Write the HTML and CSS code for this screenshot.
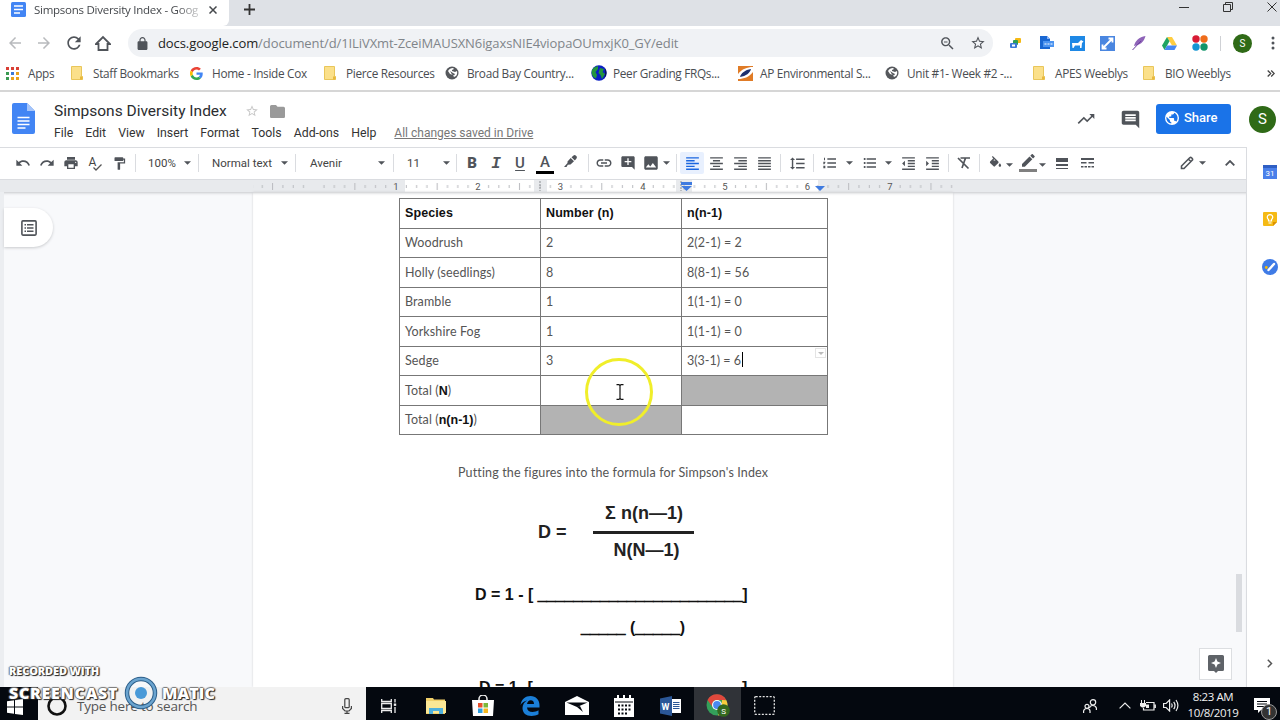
FILE: index.html
```html
<!DOCTYPE html>
<html lang="en">
<head>
  <meta charset="UTF-8" />
  <meta name="viewport" content="width=device-width, initial-scale=1.0" />
  <title>Simpsons Diversity Index - Google Docs</title>
  <link rel="stylesheet" href="styles.css">
</head>
<body>
  <svg class="defs" width="0" height="0">
    <symbol id="caret" viewBox="0 0 8 4"><path d="M0 0h8L4 4z"/></symbol>
    <symbol id="folder" viewBox="0 0 12 14"><path fill="#fbe08a" stroke="#e9c65a" d="M.5.5h10v10h1v3H.5z"/><path fill="#e9b93c" d="M9 10.500h2.500v3H9z"/></symbol>
    <symbol id="world" viewBox="0 0 14 14"><circle cx="7" cy="7" r="6.500" fill="#55585c"/><path fill="#fff" d="M3 5c1-2 3-3 5-3l1 1-2 1v1l3 1 2-1c.5 2 0 4-1 5L9 11l-1-2-3-1-1-1.500z"/><path fill="#55585c" d="M5 5l3 2 2 1-1 1.500-2-1z"/></symbol>
    <symbol id="star" viewBox="0 0 24 24"><path d="M22 9.240l-7.190-.62L12 2 9.190 8.630 2 9.240l5.460 4.730L5.820 21 12 17.270 18.180 21l-1.630-7.030L22 9.240zM12 15.400l-3.760 2.270 1-4.280-3.320-2.880 4.380-.38L12 6.100l1.710 4.040 4.380.38-3.320 2.880 1 4.280L12 15.400z"/></symbol>
  </svg>

  <!-- Browser chrome -->
  <div class="tabstrip">
    <div class="tab">
      <svg width="15" height="15" viewBox="0 0 15 15"><rect width="15" height="15" rx="1.500" fill="#4285f4"/><path stroke="#fff" stroke-width="1.500" d="M3 4h9M3 7.500h9M3 11h6"/></svg>
      <span class="tab-title">Simpsons Diversity Index - Goog</span>
      <svg width="8" height="8" viewBox="0 0 8 8"><path stroke="#45484c" stroke-width="1.500" d="M.5.5l7 7M7.500.5l-7 7"/></svg>
    </div>
    <svg class="newtab" width="11" height="11" viewBox="0 0 11 11"><path stroke="#333" stroke-width="1.800" d="M5.500 0v11M0 5.500h11"/></svg>
    <div class="window-buttons">
      <svg width="10" height="10" viewBox="0 0 10 10"><path stroke="#333" d="M0 5.500h10"/></svg>
      <svg width="10" height="10" viewBox="0 0 10 10"><path fill="none" stroke="#333" d="M.5 2.500h7v7h-7zM2.500 2.500v-2h7v7h-2"/></svg>
      <svg width="10" height="10" viewBox="0 0 10 10"><path stroke="#333" d="M.5.5l9 9M9.500.5l-9 9"/></svg>
    </div>
  </div>

  <div class="address-row">
    <div class="nav">
      <svg class="off" width="18" height="18" viewBox="0 0 24 24"><path d="M20 11H7.830l5.590-5.590L12 4l-8 8 8 8 1.410-1.410L7.830 13H20v-2z"/></svg>
      <svg class="off" width="18" height="18" viewBox="0 0 24 24"><path d="M12 4l-1.410 1.410L16.170 11H4v2h12.170l-5.580 5.590L12 20l8-8z"/></svg>
      <svg width="20" height="20" viewBox="0 0 24 24"><path d="M17.650 6.350C16.200 4.900 14.210 4 12 4c-4.420 0-7.990 3.580-7.990 8s3.570 8 7.990 8c3.730 0 6.840-2.550 7.730-6h-2.080c-.82 2.330-3.040 4-5.650 4-3.310 0-6-2.690-6-6s2.690-6 6-6c1.660 0 3.140.69 4.220 1.780L13 11h7V4l-2.350 2.350z"/></svg>
      <svg width="16" height="16" viewBox="0 0 16 16"><path fill="none" stroke="#50545a" stroke-width="1.800" d="M1 9l7-7L15 9h-2.500v6h-9V9z"/></svg>
    </div>
    <div class="omnibox">
      <svg width="11" height="13" viewBox="4 1 16 21"><path d="M18 8h-1V6c0-2.760-2.240-5-5-5S7 3.240 7 6v2H6c-1.100 0-2 .9-2 2v10c0 1.100.9 2 2 2h12c1.100 0 2-.9 2-2V10c0-1.100-.9-2-2-2zM8.900 6c0-1.710 1.390-3.100 3.100-3.100s3.100 1.390 3.100 3.100v2H8.900V6z"/></svg>
      <span class="url"><b>docs.google.com</b>/document/d/1ILiVXmt-ZceiMAUSXN6igaxsNIE4viopaOUmxjK0_GY/edit</span>
      <svg class="zoom-out" width="17" height="17" viewBox="0 0 24 24"><path d="M15.500 14h-.79l-.28-.27C15.410 12.590 16 11.110 16 9.500 16 5.910 13.090 3 9.500 3S3 5.910 3 9.500 5.910 16 9.500 16c1.610 0 3.090-.59 4.230-1.570l.27.28v.79l5 4.990L20.490 19l-4.990-5zm-6 0C7.010 14 5 11.990 5 9.500S7.010 5 9.500 5 14 7.010 14 9.500 11.990 14 9.500 14zM7 9h5v1.500H7z"/></svg>
      <svg class="fav" width="16" height="16"><use href="#star"/></svg>
    </div>
    <div class="extensions">
      <svg width="12" height="12" viewBox="0 0 12 12"><rect x="5" y="1" width="6" height="5" rx="1" fill="#f5b914"/><rect x="3" y="3" width="5" height="5" rx="1" fill="#2f9e54"/><rect x="0" y="6" width="7" height="5" rx="1" fill="#3b78d8"/><rect x="2" y="7.500" width="3" height="2" fill="#fff"/></svg>
      <svg width="15" height="14" viewBox="0 0 15 14"><path fill="#1967d2" d="M1 0h7l3 3v10H1z"/><path fill="#8ab4f8" d="M8 0l3 3H8z"/><rect x="4" y="5" width="11" height="6" fill="#4c94f0"/><path stroke="#fff" d="M5.500 8h2M8.500 8h2M11.500 8h2"/></svg>
      <svg width="15" height="15" viewBox="0 0 15 15"><rect width="15" height="15" fill="#1e88e5"/><path fill="#fff" d="M2 7h6l3-3 2.500 1.500-1.500 1.500-.5 5H10V9.500H5L3.500 12H2.500z"/></svg>
      <svg width="15" height="15" viewBox="0 0 15 15"><rect width="15" height="15" fill="#4a86e0"/><path fill="none" stroke="#fff" stroke-width="1.800" d="M8.500 2.500h4v4M12.500 2.500l-10 10M6.500 12.500h-4v-4"/></svg>
      <svg width="14" height="15" viewBox="0 0 14 15"><path fill="#8e63b8" d="M13.500 0C7 1 3 5 2 10c6-1 10-4 11.500-10z"/><path stroke="#6b3fa0" d="M.5 14L9 5"/></svg>
      <svg width="15" height="13" viewBox="0 0 15 13"><path fill="#ffcd40" d="M5 0h5l5 8.500h-5z"/><path fill="#1fa463" d="M5 0l2.500 4.300L2.500 13 0 8.500z"/><path fill="#4688f4" d="M5 8.500h10L12.500 13h-10z"/></svg>
      <svg width="16" height="16" viewBox="0 0 16 16"><circle cx="4" cy="4" r="3.700" fill="#d81b35"/><circle cx="12" cy="4" r="3.700" fill="#ef6c1a"/><circle cx="4" cy="12" r="3.700" fill="#1595d3"/><circle cx="12" cy="12" r="3.700" fill="#12966a"/></svg>
    </div>
    <span class="divider"></span>
    <span class="avatar small">S</span>
    <svg class="dots" width="4" height="14" viewBox="0 0 4 14"><circle cx="2" cy="2" r="1.500"/><circle cx="2" cy="7" r="1.500"/><circle cx="2" cy="12" r="1.500"/></svg>
  </div>

  <div class="bookmarks">
    <div class="bookmark"><svg width="13" height="13" viewBox="0 0 13 13"><path fill="#d93f35" d="M0 0h3v3H0zM5 0h3v3H5zM10 0h3v3h-3z"/><path fill="#3a9a52" d="M0 5h3v3H0z"/><path fill="#3b78d8" d="M5 5h3v3H5z"/><path fill="#e8a01c" d="M10 5h3v3h-3zM5 10h3v3H5zM10 10h3v3h-3z"/><path fill="#3a9a52" d="M0 10h3v3H0z"/></svg><span>Apps</span></div>
    <div class="bookmark"><svg width="12" height="14"><use href="#folder"/></svg><span>Staff Bookmarks</span></div>
    <div class="bookmark"><svg width="13" height="13" viewBox="0 0 48 48"><path fill="#ea4335" d="M24 9.500c3.540 0 6.710 1.220 9.210 3.600l6.850-6.850C35.900 2.380 30.470 0 24 0 14.620 0 6.510 5.380 2.560 13.220l7.980 6.190C12.430 13.720 17.740 9.500 24 9.500z"/><path fill="#4285f4" d="M46.980 24.550c0-1.570-.15-3.090-.38-4.550H24v9.020h12.940c-.58 2.960-2.260 5.480-4.780 7.180l7.730 6c4.510-4.180 7.090-10.360 7.090-17.650z"/><path fill="#fbbc05" d="M10.530 28.590A14.500 14.500 0 0 1 10.530 19.410l-7.980-6.190a24 24 0 0 0 0 21.560z"/><path fill="#34a853" d="M24 48c6.480 0 11.930-2.130 15.890-5.810l-7.730-6c-2.150 1.450-4.920 2.300-8.160 2.300-6.260 0-11.570-4.220-13.470-9.910l-7.980 6.190C6.510 42.620 14.620 48 24 48z"/></svg><span>Home - Inside Cox</span></div>
    <div class="bookmark"><svg width="12" height="14"><use href="#folder"/></svg><span>Pierce Resources</span></div>
    <div class="bookmark"><svg width="14" height="14"><use href="#world"/></svg><span>Broad Bay Country...</span></div>
    <div class="bookmark"><svg width="16" height="16" viewBox="0 0 16 16"><circle cx="8" cy="8" r="7.700" fill="#0a1fc4"/><path fill="#22963c" d="M3 2.500l4-1.500v3L4.500 7 6 10l-1 3.500C1 12 0 8 1 5zM9 3l4 1-1.500 3 2.500 2-3 5-1.500-4L7.500 8z"/><path fill="#0b1040" d="M14 3c2 3 2 7-.5 10 .8-3 1-7 .5-10z"/></svg><span>Peer Grading FRQs...</span></div>
    <div class="bookmark"><svg width="15" height="15" viewBox="0 0 15 15"><rect width="15" height="15" fill="#e07b26"/><path fill="#fff" d="M0 8C4 3 9 1 15 1v5C11 11 6 13 0 13z"/><path fill="#1c2f6e" d="M2 11c1-4 5-7 11-8-1 4-5 7-11 8z"/></svg><span>AP Environmental S...</span></div>
    <div class="bookmark"><svg width="14" height="14"><use href="#world"/></svg><span>Unit #1- Week #2 -...</span></div>
    <div class="bookmark"><svg width="12" height="14"><use href="#folder"/></svg><span>APES Weeblys</span></div>
    <div class="bookmark"><svg width="12" height="14"><use href="#folder"/></svg><span>BIO Weeblys</span></div>
    <svg class="more" width="8" height="7" viewBox="0 0 8 7"><path fill="none" stroke="#444" stroke-width="1.300" d="M.7.500l3 3-3 3M4.200.500l3 3-3 3"/></svg>
  </div>

  <!-- Docs header -->
  <header class="docs-header">
    <svg class="docs-logo" width="23" height="31" viewBox="0 0 23 31"><path fill="#4285f4" d="M2 0h13l8 8v21a2 2 0 0 1-2 2H2a2 2 0 0 1-2-2V2a2 2 0 0 1 2-2z"/><path fill="#a6c5fa" d="M15 0l8 8h-8z"/><path stroke="#fff" stroke-width="1.500" d="M5.500 14.500h12M5.500 18h12M5.500 21.500h12M5.500 25h8"/></svg>
    <div class="doc-info">
      <div class="doc-title">
        <span>Simpsons Diversity Index</span>
        <svg class="title-star" width="14" height="14"><use href="#star"/></svg>
        <svg width="15" height="13" viewBox="2 4 20 16" preserveAspectRatio="none"><path fill="#9a9a9a" d="M10 4H4c-1.100 0-1.990.9-1.990 2L2 18c0 1.100.9 2 2 2h16c1.100 0 2-.9 2-2V8c0-1.100-.9-2-2-2h-8l-2-2z"/></svg>
      </div>
      <nav class="menus">
        <span>File</span><span>Edit</span><span>View</span><span>Insert</span><span>Format</span><span>Tools</span><span>Add-ons</span><span>Help</span>
        <span class="saved">All changes saved in Drive</span>
      </nav>
    </div>
    <div class="header-actions">
      <svg width="20" height="20" viewBox="0 0 24 24"><path d="M16 6l2.290 2.290-4.880 4.880-4-4L2 16.590 3.410 18l6-6 4 4 6.300-6.290L22 12V6z"/></svg>
      <svg width="21" height="21" viewBox="0 0 24 24"><path d="M21.990 4c0-1.100-.89-2-1.990-2H4c-1.100 0-2 .9-2 2v12c0 1.100.9 2 2 2h14l4 4-.01-18zM18 14H6v-2h12v2zm0-3H6V9h12v2zm0-3H6V6h12v2z"/></svg>
      <div class="share"><svg width="14" height="14" viewBox="2 2 20 20"><circle cx="12" cy="12" r="10" fill="#fff"/><path fill="#1a73e8" d="M11 19.930c-3.950-.49-7-3.850-7-7.930 0-.62.08-1.210.21-1.790L9 15v1c0 1.100.9 2 2 2v1.930zM17.900 17.390c-.26-.81-1-1.390-1.900-1.390h-1v-3c0-.55-.45-1-1-1H8v-2h2c.55 0 1-.45 1-1V7h2c1.100 0 2-.9 2-2v-.41c2.930 1.190 5 4.060 5 7.410 0 2.080-.8 3.970-2.100 5.390z"/></svg><span>Share</span></div>
      <span class="avatar">S</span>
    </div>
  </header>

  <div class="workspace">
    <main class="editor">
      <div class="toolbar">
        <div class="group g-edit">
          <i class="tool"><svg width="16" height="16" viewBox="0 0 24 24"><path d="M12.500 8c-2.650 0-5.050.99-6.900 2.600L2 7v9h9l-3.620-3.620c1.390-1.160 3.160-1.880 5.120-1.880 3.540 0 6.550 2.310 7.600 5.500l2.370-.78C21.080 11.030 17.150 8 12.500 8z"/></svg></i>
          <i class="tool"><svg width="16" height="16" viewBox="0 0 24 24"><path d="M18.400 10.600C16.550 8.990 14.150 8 11.500 8c-4.650 0-8.580 3.030-9.960 7.220L3.900 16c1.050-3.190 4.050-5.500 7.600-5.500 1.950 0 3.730.72 5.120 1.880L13 16h9V7l-3.600 3.600z"/></svg></i>
          <i class="tool"><svg width="16" height="16" viewBox="0 0 24 24"><path d="M19 8H5c-1.660 0-3 1.340-3 3v6h4v4h12v-4h4v-6c0-1.660-1.340-3-3-3zm-3 11H8v-5h8v5zm3-7c-.55 0-1-.45-1-1s.45-1 1-1 1 .45 1 1-.45 1-1 1zm-1-9H6v4h12V3z"/></svg></i>
          <i class="tool spell"><span>A</span><svg width="9" height="7" viewBox="0 0 9 7"><path fill="none" stroke="#555" stroke-width="1.300" d="M.5 3.500L3 6l5.500-5.500"/></svg></i>
          <i class="tool"><svg width="15" height="15" viewBox="0 0 24 24"><path d="M18 4V3c0-.55-.45-1-1-1H5c-.55 0-1 .45-1 1v4c0 .55.45 1 1 1h12c.55 0 1-.45 1-1V6h1v4H9v11c0 .55.45 1 1 1h2c.55 0 1-.45 1-1v-9h8V4h-3z"/></svg></i>
        </div>
        <div class="group g-zoom"><span>100%</span><svg class="caret"><use href="#caret"/></svg></div>
        <div class="group g-style"><span>Normal text</span><svg class="caret"><use href="#caret"/></svg></div>
        <div class="group g-font"><span>Avenir</span><svg class="caret"><use href="#caret"/></svg></div>
        <div class="group g-size"><span>11</span><svg class="caret"><use href="#caret"/></svg></div>
        <div class="group g-text">
          <i class="tool letter bold">B</i>
          <i class="tool letter italic">I</i>
          <i class="tool letter underline">U</i>
          <i class="tool letter color">A</i>
          <i class="tool marker"><svg width="13" height="13" viewBox="0 0 13 13"><path d="M3.500 6.500L6.700 3 10 6.200 6.500 9.500 3.800 9.800 2.500 12H0l3.500-4zM7.500 2.300L9.500.5q1.200-.8 2.200 0l.8.8q.8 1 0 2.200L10.800 5.500z"/></svg></i>
        </div>
        <div class="group g-insert">
          <i class="tool"><svg width="18" height="18" viewBox="0 0 24 24"><path d="M3.900 12c0-1.710 1.390-3.100 3.100-3.100h4V7H7c-2.760 0-5 2.240-5 5s2.240 5 5 5h4v-1.900H7c-1.710 0-3.100-1.390-3.100-3.100zM8 13h8v-2H8v2zm9-6h-4v1.900h4c1.710 0 3.100 1.390 3.100 3.100s-1.390 3.100-3.100 3.100h-4V17h4c2.760 0 5-2.240 5-5s-2.240-5-5-5z"/></svg></i>
          <i class="tool"><svg width="16" height="16" viewBox="0 0 24 24"><path d="M22 4c0-1.100-.9-2-2-2H4c-1.100 0-2 .9-2 2v12c0 1.100.9 2 2 2h14l4 4V4zm-5 7h-4v4h-2v-4H7V9h4V5h2v4h4v2z"/></svg></i>
          <i class="tool image"><svg width="18" height="18" viewBox="0 0 24 24"><path d="M21 19V5c0-1.100-.9-2-2-2H5c-1.100 0-2 .9-2 2v14c0 1.100.9 2 2 2h14c1.100 0 2-.9 2-2zM8.500 13.500l2.500 3.010L14.500 12l4.500 6H5l3.500-4.500z"/></svg></i>
          <svg class="caret"><use href="#caret"/></svg>
        </div>
        <div class="group g-align">
          <i class="tool active"><svg width="17" height="17" viewBox="0 0 24 24"><path d="M15 15H3v2h12v-2zm0-8H3v2h12V7zM3 13h18v-2H3v2zm0 8h18v-2H3v2zM3 3v2h18V3H3z"/></svg></i>
          <i class="tool"><svg width="17" height="17" viewBox="0 0 24 24"><path d="M7 15v2h10v-2H7zm-4 6h18v-2H3v2zm0-8h18v-2H3v2zm4-6v2h10V7H7zM3 3v2h18V3H3z"/></svg></i>
          <i class="tool"><svg width="17" height="17" viewBox="0 0 24 24"><path d="M3 21h18v-2H3v2zm6-4h12v-2H9v2zm-6-4h18v-2H3v2zm6-4h12V7H9v2zM3 3v2h18V3H3z"/></svg></i>
          <i class="tool"><svg width="17" height="17" viewBox="0 0 24 24"><path d="M3 21h18v-2H3v2zm0-4h18v-2H3v2zm0-4h18v-2H3v2zm0-4h18V7H3v2zm0-6v2h18V3H3z"/></svg></i>
        </div>
        <div class="group g-spacing">
          <i class="tool"><svg width="17" height="17" viewBox="0 0 24 24"><path d="M6 7h2.500L5 3.500 1.500 7H4v10H1.500L5 20.500 8.500 17H6V7zm4-2v2h12V5H10zm0 14h12v-2H10v2zm0-6h12v-2H10v2z"/></svg></i>
        </div>
        <div class="group g-lists">
          <i class="tool"><svg width="16" height="16" viewBox="0 0 24 24"><path d="M3 4h1.500v4H3zM2 10h3v1.500L3.500 14H2zM2 16h3v4H2zM8 5v2h13V5zM8 19h13v-2H8zM8 13h13v-2H8z"/></svg></i>
          <svg class="caret"><use href="#caret"/></svg>
          <i class="tool"><svg width="16" height="16" viewBox="0 0 24 24"><path d="M4 10.500c-.83 0-1.500.67-1.500 1.500s.67 1.500 1.500 1.500 1.500-.67 1.500-1.500-.67-1.500-1.500-1.500zm0-6c-.83 0-1.500.67-1.500 1.500S3.170 7.500 4 7.500 5.500 6.830 5.500 6 4.830 4.500 4 4.500zm0 12c-.83 0-1.500.68-1.500 1.500s.68 1.500 1.500 1.500 1.500-.68 1.500-1.500-.67-1.500-1.500-1.500zM7 19h14v-2H7v2zm0-6h14v-2H7v2zm0-8v2h14V5H7z"/></svg></i>
          <svg class="caret second"><use href="#caret"/></svg>
          <i class="tool"><svg width="17" height="17" viewBox="0 0 24 24"><path d="M11 17h10v-2H11v2zm-8-5l4 4V8l-4 4zm0 9h18v-2H3v2zM3 3v2h18V3H3zm8 6h10V7H11v2zm0 4h10v-2H11v2z"/></svg></i>
          <i class="tool"><svg width="17" height="17" viewBox="0 0 24 24"><path d="M3 21h18v-2H3v2zM3 8v8l4-4-4-4zm8 9h10v-2H11v2zM3 3v2h18V3H3zm8 6h10V7H11v2zm0 4h10v-2H11v2z"/></svg></i>
        </div>
        <div class="group g-clear">
          <i class="tool"><svg width="14" height="14" viewBox="0 0 14 14"><path fill="none" stroke="#50545a" stroke-width="1.700" d="M3.500 2h9.500M8.500 2L5 12M1 2l10.500 10.500"/></svg></i>
        </div>
        <div class="group g-cell">
          <i class="tool"><svg width="15" height="15" viewBox="0 0 24 24"><path d="M16.560 8.940L7.620 0 6.210 1.410l2.380 2.380-5.150 5.150c-.59.59-.59 1.540 0 2.120l5.500 5.500c.29.290.68.440 1.060.440s.77-.15 1.060-.44l5.500-5.500c.59-.58.59-1.530 0-2.120zM8.500 6.700L10 5.210 12 7.500zM19 11.500s-2 2.170-2 3.500c0 1.100.9 2 2 2s2-.9 2-2c0-1.330-2-3.500-2-3.500z"/></svg></i>
          <svg class="caret"><use href="#caret"/></svg>
          <i class="tool"><svg width="18" height="18" viewBox="0 0 24 24"><path d="M17.750 7L14 3.250l-10 10V17h3.750l10-10zm2.960-2.960c.39-.39.39-1.020 0-1.410L18.370.29c-.39-.39-1.020-.39-1.410 0L15 2.250 18.750 6l1.960-1.960z"/><path fill="#808080" d="M0 20h24v4H0z"/></svg></i>
          <svg class="caret"><use href="#caret"/></svg>
          <i class="tool weight"><svg width="12" height="11" viewBox="0 0 12 11"><path d="M0 0h12v4H0zM0 6h12v2H0zM0 10h12v1H0z"/></svg></i>
          <i class="tool dash"><svg width="13" height="10" viewBox="0 0 13 10"><path d="M0 0h13v2H0zM0 4h5.500v1.500H0zM7.500 4H13v1.500H7.500zM0 8h2.500v1.500H0zM3.500 8H6v1.500H3.500zM7 8h2.500v1.500H7zM10.500 8H13v1.500h-2.500z"/></svg></i>
        </div>
        <div class="g-mode">
          <i class="tool"><svg width="14" height="14" viewBox="0 0 14 14"><path fill="none" stroke="#50545a" stroke-width="1.600" d="M1.500 12.500V10L9.700 1.800q1-.8 1.800 0l.7.700q.8 1 0 1.800L4 12.500zM8.500 3.200l2.300 2.300"/></svg></i>
          <svg class="caret"><use href="#caret"/></svg>
          <svg class="collapse" width="10" height="6" viewBox="0 0 10 6"><path fill="none" stroke="#50545a" stroke-width="1.800" d="M.7 5.300L5 1l4.300 4.300"/></svg>
        </div>
      </div>

      <svg class="ruler" width="1246" height="12" viewBox="0 0 1246 12">
        <defs>
          <!-- one inch is 82.3px, eighths between the numbers -->
          <pattern id="inch" x="396" y="0" width="82.3" height="12" patternUnits="userSpaceOnUse">
            <path stroke="#b9bbbf" d="M10.300 5v3M20.600 5v3M30.900 5v3M41.200 3v7M51.500 5v3M61.800 5v3M72.100 5v3"/>
          </pattern>
        </defs>
        <path fill="#fff" d="M405 0h129v12H405zM547 0h129v12H547zM692 0h126v12H692z"/>
        <rect x="253" width="700" height="12" fill="url(#inch)"/>
        <path stroke="#8a8d91" stroke-dasharray="2 1" d="M540 1v10M681 1v10"/>
        <g class="ruler-numbers"><text x="396" y="9.500">1</text><text x="478" y="9.500">2</text><text x="560.500" y="9.500">3</text><text x="643" y="9.500">4</text><text x="725" y="9.500">5</text><text x="807.500" y="9.500">6</text><text x="890" y="9.500">7</text></g>
        <path fill="#3f7be0" d="M681 2h11v3h-11zM681 6h11l-5.500 5zM815 6h10l-5 5z"/>
      </svg>

      <div class="canvas">
        <div class="left-rail">
          <div class="outline-button">
            <svg width="16" height="16" viewBox="0 0 16 16"><rect x=".9" y=".9" width="14.200" height="14.200" rx="1" fill="none" stroke="#50545a" stroke-width="1.600"/><path stroke="#50545a" stroke-width="1.500" d="M3.500 4.700h1.500M6 4.700h6.500M3.500 8h1.500M6 8h6.500M3.500 11.300h1.500M6 11.300h6.500"/></svg>
          </div>
        </div>
        <article class="page">
          <table class="species">
            <tr><th>Species</th><th>Number (n)</th><th>n(n-1)</th></tr>
            <tr><td>Woodrush</td><td>2</td><td>2(2-1) = 2</td></tr>
            <tr><td>Holly (seedlings)</td><td>8</td><td>8(8-1) = 56</td></tr>
            <tr><td>Bramble</td><td>1</td><td>1(1-1) = 0</td></tr>
            <tr><td>Yorkshire Fog</td><td>1</td><td>1(1-1) = 0</td></tr>
            <tr><td>Sedge</td><td>3</td><td class="editing">3(3-1) = 6<span class="text-cursor"></span><span class="cell-menu"><svg width="6" height="3"><use href="#caret"/></svg></span></td></tr>
            <tr><td>Total (<b>N</b>)</td><td></td><td class="shaded"></td></tr>
            <tr><td>Total (<b>n(n-1)</b>)</td><td class="shaded"></td><td></td></tr>
          </table>
          <p class="lead">Putting the figures into the formula for Simpson's Index</p>
          <div class="formula">
            <span class="lhs">D =</span>
            <span class="fraction"><span class="top">Σ n(n—1)</span><span class="bottom">N(N—1)</span></span>
          </div>
          <p class="blank first">D = 1 - [ <span>_______________________</span>]</p>
          <p class="blank second"><span>_____</span> (<span>_____</span>)</p>
          <p class="blank third">D = 1- [ <span>_______________________</span>]</p>
        </article>
        <div class="right-rail">
          <div class="scroll-thumb"></div>
          <div class="explore"><svg width="16" height="18" viewBox="0 0 16 18"><path fill="#5f6368" d="M1.500 0h13A1.500 1.500 0 0 1 16 1.500v13a1.500 1.500 0 0 1-1.500 1.500H10l-2 2-2-2H1.500A1.500 1.500 0 0 1 0 14.500v-13A1.500 1.500 0 0 1 1.500 0z"/><path fill="#fff" d="M8 3l1.400 3.600L13 8 9.400 9.400 8 13 6.600 9.400 3 8l3.600-1.400z"/></svg></div>
        </div>
      </div>
    </main>

    <aside class="side-panel">
      <div class="calendar">31</div>
      <svg class="keep" width="14" height="14" viewBox="0 0 14 14"><path fill="#f5ba15" d="M1 0h12a1 1 0 0 1 1 1v9l-4 4H1a1 1 0 0 1-1-1V1a1 1 0 0 1 1-1z"/><path fill="#dc9200" d="M10 10h4l-4 4z"/><path fill="none" stroke="#fff" stroke-width="1.200" d="M5.500 9V7.500a2.700 2.700 0 1 1 3 0V9zM5.500 11h3"/></svg>
      <svg class="tasks" width="16" height="16" viewBox="0 0 16 16"><circle cx="8" cy="8" r="8" fill="#3f7be6"/><path stroke="#fff" stroke-width="2.400" stroke-linecap="round" d="M6.500 11L12 5"/><circle cx="4.300" cy="8.500" r="1.400" fill="#fbbc04"/></svg>
      <svg class="expand" width="6" height="9" viewBox="0 0 6 9"><path fill="none" stroke="#555" stroke-width="1.500" d="M.8.800l3.700 3.700L.8 8.200"/></svg>
    </aside>
  </div>

  <!-- Windows taskbar -->
  <footer class="taskbar">
    <div class="start"><svg width="16" height="16" viewBox="0 0 16 16"><path fill="#fff" d="M0 2.200l7-1V7.500H0zM8 1l8-1v7.500H8zM0 8.500h7v6.300l-7-1zM8 8.500h8V16l-8-1z"/></svg></div>
    <div class="search">
      <svg width="20" height="20" viewBox="0 0 20 20"><circle cx="10" cy="10" r="8.500" fill="none" stroke="#111" stroke-width="2.600"/></svg>
      <span>Type here to search</span>
      <svg class="mic" width="10" height="16" viewBox="0 0 10 16"><rect x="2.800" y=".7" width="4.400" height="9" rx="1" fill="none" stroke="#444" stroke-width="1.200"/><path fill="none" stroke="#444" stroke-width="1.200" d="M.6 8v2.500L3 13h4l2.400-2.500V8M5 13v2.500M2.500 15.300h5"/></svg>
    </div>
    <div class="apps">
      <i><svg width="16" height="14" viewBox="0 0 16 14"><path fill="none" stroke="#eee" stroke-width="1.300" d="M.7 0v2.500h9.600V0M.7 14v-2.500h9.600V14M.7 4.500h9.600v5H.7zM14 0v3.500M14 8v6"/><path fill="#eee" d="M12.800 4.500h2.400v2.400h-2.400z"/></svg></i>
      <i><svg width="20" height="17" viewBox="0 0 20 17"><path fill="#f1d06a" d="M0 1h7l1 1.500h11V17H0z"/><path fill="#fbe795" d="M0 4h20v12H0z"/><path fill="#4fb0dc" d="M3 17v-6h14v6h-4v-3H7v3z"/></svg></i>
      <i><svg width="22" height="21" viewBox="0 0 22 21"><path fill="none" stroke="#eee" stroke-width="1.500" d="M7 6V4a4 4 0 0 1 8 0v2"/><path fill="#fff" d="M0 5h22l-1 16H1z"/><path fill="#e8502c" d="M6 8h4.500v4.500H6z"/><path fill="#7db83a" d="M11.500 8H16v4.500h-4.500z"/><path fill="#2d9fe0" d="M6 13.500h4.500V18H6z"/><path fill="#f5b820" d="M11.500 13.500H16V18h-4.500z"/></svg></i>
      <i><svg width="20" height="20" viewBox="0 0 20 20"><path fill="#1b7fd8" d="M.5 9C1.500 3 5.500 0 10.500 0 16 0 19.500 4 19.500 9v2.500H7c.2 3 2.500 4.500 5.500 4.500 2.200 0 4.200-.6 6-1.700v4C16.500 19.500 14 20 11.500 20 6 20 2.500 17 2.500 12c0-3.200 1.800-6 4.700-7.500C4.500 4.800 2 6.500.5 9zM7 8h7c0-2.300-1-3.700-3.300-3.700C8.800 4.300 7.500 5.800 7 8z"/></svg></i>
      <i><svg width="24" height="19" viewBox="0 0 24 19"><path fill="#fff" d="M0 6L12 0l12 6v13H0z"/><path fill="#04080f" d="M1.500 6.500h21L12 11zM12 11l6 5-3-6z"/></svg></i>
      <i><svg width="20" height="22" viewBox="0 0 20 22"><path fill="#fff" d="M0 3h20v19H0zM3 0h2v3H3zM9 0h2v3H9zM15 0h2v3h-2z"/><path stroke="#04080f" stroke-width="2" stroke-dasharray="2 1.500" d="M4 10.500h13M4 14.500h13M4 18.500h10"/><path stroke="#04080f" d="M1 7h18"/></svg></i>
      <i><svg width="21" height="20" viewBox="0 0 21 20"><path fill="#fff" d="M10 3h11v14H10z"/><path stroke="#2b5797" d="M13 6.500h6.500M13 8.500h6.500M13 10.500h6.500M13 12.500h6.500"/><path fill="#2b5797" d="M0 2.500L12 0v20L0 17.500z"/><text x="1.500" y="14" class="word-letter">W</text></svg></i>
      <i class="running"><svg width="24" height="23" viewBox="0 0 24 23"><circle cx="11" cy="11" r="10.500" fill="#34a05a"/><path fill="#e0483c" d="M1.500 6A10.500 10.500 0 0 1 20.300 6H11a5 5 0 0 0-4.500 7z"/><path fill="#f8cc3c" d="M20.300 6.200A10.500 10.500 0 0 1 12 21.500L15.500 13 16 6z"/><circle cx="11" cy="11" r="5" fill="#fff"/><circle cx="11" cy="11" r="3.900" fill="#4a8af0"/><circle cx="17.500" cy="16.500" r="6.300" fill="#33691e"/><text x="15.200" y="19.500" class="chrome-letter">S</text></svg></i>
      <i><svg width="21" height="19" viewBox="0 0 21 19"><rect x=".7" y=".7" width="19.600" height="17.600" rx="1" fill="none" stroke="#e5e5e5" stroke-width="1.300" stroke-dasharray="2 1.500"/></svg></i>
    </div>
    <div class="tray">
      <svg class="people" width="14" height="14" viewBox="0 0 14 14"><path fill="none" stroke="#eee" stroke-width="1.200" d="M.6 14v-2Q1 9.500 4 9.500T7 12v2M6.500 9Q7 6.500 9.700 6.500T13.400 9v2"/><circle cx="4" cy="7.300" r="2" fill="none" stroke="#eee" stroke-width="1.200"/><circle cx="10" cy="3.300" r="2.700" fill="none" stroke="#eee" stroke-width="1.200"/></svg>
      <svg class="up" width="12" height="7" viewBox="0 0 12 7"><path fill="none" stroke="#eee" stroke-width="1.200" d="M.6 6.400L6 1l5.400 5.400"/></svg>
      <svg class="battery" width="16" height="12" viewBox="0 0 16 12"><path fill="none" stroke="#eee" stroke-width="1.200" d="M6 2.500h8v7.500H3.500V8M15.300 4.500V8"/><path fill="#eee" d="M0 3h6v3L4 7.500H2L0 6zM1 0h1v3H1zM4 0h1v3H4zM6 4.500h3V8H6z"/></svg>
      <svg class="volume" width="16" height="13" viewBox="0 0 16 13"><path fill="none" stroke="#eee" stroke-width="1.200" d="M.6 4.500h2.500l3.500-3.500v11L3.100 8.500H.6zM8.500 4.500q1.300 2 0 4M10.700 2.800q2.600 3.700 0 7.400M13 1q3.800 5.500 0 11"/></svg>
      <div class="clock"><span>8:23 AM</span><span>10/8/2019</span></div>
      <div class="notifications"><svg width="16" height="16" viewBox="0 0 16 16"><path fill="#fff" d="M0 0h16v12H7l-3 3v-3H0z"/><path stroke="#04080f" d="M3 3.500h10M3 6h10M3 8.500h7"/></svg><span>1</span></div>
    </div>
  </footer>

  <!-- Pointer highlight and recorder watermark -->
  <div class="pointer"><svg width="8" height="16" viewBox="0 0 8 16"><path fill="none" stroke="#111" stroke-width="1.200" d="M.5.700h2.500l1 1 1-1h2.500M4 1.500v13M.5 15.300h2.500l1-1 1 1h2.500"/></svg></div>
  <div class="watermark">
    <div class="recorded">RECORDED WITH</div>
    <div class="brand"><span class="w1">SCREENCAST</span><svg width="34" height="34" viewBox="0 0 34 34"><circle cx="17" cy="17" r="14" fill="none" stroke="#2d5f8a" stroke-width="4.500"/><circle cx="17" cy="17" r="14" fill="none" stroke="#6ba4cf" stroke-width="2.500"/><circle cx="17" cy="17" r="6" fill="#4a9ad8"/></svg><span class="w2">MATIC</span></div>
  </div>
</body>
</html>
```
FILE: styles.css
```css
* {
  box-sizing: border-box;
}
body {
  margin: 0;
  width: 1280px;
  height: 720px;
  overflow: hidden;
  position: relative;
  display: flex;
  flex-direction: column;
  background: #fff;
  font-family: Roboto, sans-serif;
  color: #222;
}
svg {
  display: block;
  flex: none;
  fill: #50545a;
}
.defs {
  position: absolute;
}
p {
  margin: 0;
}

/* tab strip */
.tabstrip {
  height: 26px;
  flex: none;
  display: flex;
  background: #dee1e6;
}
.tab {
  width: 229px;
  height: 26px;
  padding: 0 11px 7px 11px;
  display: flex;
  align-items: center;
  background: #fff;
  border-radius: 0 0 6px 0;
}
.tab-title {
  width: 168px;
  margin: 0 7px 0 8px;
  overflow: hidden;
  font: 11.500px "Open Sans", sans-serif;
  letter-spacing: -0.26px;
  white-space: nowrap;
  color: #45484c;
  -webkit-mask-image: linear-gradient(90deg, #000 142px, rgba(0, 0, 0, 0.25) 165px);
}
.newtab {
  margin: 4px 0 0 15px;
}
.window-buttons {
  margin: 2px 3px 0 auto;
  display: flex;
  gap: 34px;
}

/* address bar */
.address-row {
  height: 34px;
  flex: none;
  display: flex;
  align-items: center;
}
.nav {
  width: 128px;
  padding-right: 11px;
  display: flex;
  align-items: center;
}
.nav svg {
  margin: 0 auto;
}
.nav .off {
  fill: #b8babd;
}
.omnibox {
  width: 865px;
  height: 28px;
  padding: 0 7px 0 9px;
  display: flex;
  align-items: center;
  border-radius: 14px;
  background: #f0f2f5;
}
.url {
  margin-left: 10px;
  font: 13px "Open Sans", sans-serif;
  letter-spacing: -0.09px;
  color: #80858a;
}
.url b {
  font-weight: normal;
  color: #222;
}
.zoom-out {
  margin-left: auto;
}
.fav {
  margin-left: 14px;
}
.extensions {
  width: 214px;
  margin-left: 8px;
  display: grid;
  grid-template-columns: repeat(7, 1fr);
  justify-items: center;
  align-items: center;
}
.divider {
  width: 1px;
  height: 15px;
  margin-left: 5px;
  background: #cfd1d5;
}
.avatar {
  width: 27px;
  height: 27px;
  flex: none;
  border-radius: 50%;
  background: #2f6a17;
  color: #fff;
  font-size: 15px;
  line-height: 27px;
  text-align: center;
}
.avatar.small {
  width: 19px;
  height: 19px;
  margin-left: 12px;
  font-size: 10px;
  line-height: 19px;
}
.dots {
  margin-left: 19px;
}

/* bookmarks */
.bookmarks {
  height: 32px;
  flex: none;
  padding: 0 0 4px 6px;
  display: grid;
  grid-template-columns: 65px 119px 134px 121px 146px 147px 147px 148px 110px 124px 10px;
  align-items: center;
  border-bottom: 2px solid #d6d6d6;
}
.bookmark {
  display: grid;
  grid-template-columns: 22px auto;
  align-items: center;
  font: 11.800px "Open Sans", sans-serif;
  letter-spacing: -0.3px;
  white-space: nowrap;
  color: #4a4d51;
}

/* docs header */
.docs-header {
  height: 55px;
  flex: none;
  display: flex;
}
.docs-logo {
  margin: 11px 0 0 12px;
}
.doc-info {
  margin-left: 19px;
}
.doc-title {
  height: 20px;
  margin-top: 9px;
  display: flex;
  align-items: center;
  font: 15.500px/20px Roboto, sans-serif;
  color: #2b2d30;
}
.title-star {
  margin: 0 11px 0 18px;
  fill: #c8c8c8;
}
.menus {
  margin-top: 4px;
  display: flex;
  gap: 12px;
  font-size: 12.300px;
  line-height: 16px;
  color: #333;
}
.saved {
  margin-left: 6px;
  font-size: 12px;
  color: #777;
  text-decoration: underline;
}
.header-actions {
  margin-left: auto;
  padding: 0 4px 1px 0;
  display: flex;
  align-items: center;
}
.header-actions > svg {
  margin-right: 24px;
}
.header-actions > svg + svg {
  margin-right: 15px;
}
.share {
  width: 75px;
  height: 30px;
  margin-right: 18px;
  padding: 0 0 3px 9px;
  display: flex;
  align-items: center;
  gap: 5px;
  border-radius: 3px;
  background: #1a73e8;
  color: #fff;
  font-size: 13px;
  font-weight: 500;
}

/* toolbar */
.workspace {
  height: 540px;
  flex: none;
  display: flex;
}
.editor {
  width: 1247px;
  display: flex;
  flex-direction: column;
  border-top: 1px solid #dadce0;
  border-right: 1px solid #dadce0;
}
.toolbar {
  height: 32px;
  flex: none;
  padding-bottom: 1px;
  display: flex;
  align-items: center;
  border-bottom: 1px solid #dadce0;
}
.group {
  height: 18px;
  display: flex;
  align-items: center;
  border-right: 1px solid #dadce0;
  font-size: 11.500px;
  color: #444;
  white-space: nowrap;
}
.tool {
  width: 24px;
  height: 22px;
  flex: none;
  display: flex;
  align-items: center;
  justify-content: center;
  font-style: normal;
}
.caret {
  width: 7px;
  height: 4px;
}
.g-edit {
  width: 136px;
  padding-left: 11px;
}
.spell {
  position: relative;
  padding: 0 5px 3px 0;
  font-size: 12px;
}
.spell svg {
  position: absolute;
  left: 10px;
  top: 12px;
}
.g-zoom {
  width: 63px;
  padding: 0 7px 0 12px;
  justify-content: space-between;
}
.g-style {
  width: 97px;
  padding: 0 7px 0 13px;
  justify-content: space-between;
}
.g-font {
  width: 98px;
  padding: 0 8px 0 14px;
  justify-content: space-between;
}
.g-size {
  width: 63px;
  padding: 0 6px 0 13px;
  justify-content: space-between;
}
.g-text {
  width: 132px;
  padding-left: 3px;
}
.letter {
  font: 500 15px Roboto, sans-serif;
  color: #50545a;
}
.bold {
  font-weight: 900;
}
.italic {
  padding-top: 2px;
  font-family: "Liberation Mono", monospace;
  font-size: 16px;
  font-weight: bold;
  font-style: italic;
}
.underline {
  text-decoration: underline;
  text-underline-offset: 2px;
}
.color {
  width: 18px;
  height: 18px;
  margin: 3px 4px 0 4px;
  padding-bottom: 3px;
  border-bottom: 3px solid #000;
}
.marker {
  width: 24px;
  padding-bottom: 3px;
}
.g-insert {
  width: 88px;
  padding-left: 3px;
}
.image {
  width: 22px;
}
.g-insert .caret {
  margin-left: 1px;
}
.g-align {
  width: 104px;
  padding-left: 3px;
}
.active {
  background: #e8f0fe;
  border-radius: 2px;
}
.active svg {
  fill: #1a66e0;
}
.g-spacing {
  width: 33px;
  padding-left: 4px;
}
.g-lists {
  width: 135px;
  padding-left: 4px;
}
.g-lists .caret {
  margin: 0 5px 0 4px;
}
.g-lists .second {
  margin: 0 4px 0 3px;
}
.g-clear {
  width: 31px;
  padding-left: 3px;
}
.g-cell {
  padding-left: 3px;
  border-right: none;
}
.g-cell .caret {
  margin: 3px 3px 0 -1px;
}
.weight {
  margin-left: 1px;
}
.dash {
  margin-left: 1px;
}
.g-mode {
  margin-left: auto;
  padding-right: 11px;
  display: flex;
  align-items: center;
}
.collapse {
  margin-left: 19px;
}

/* ruler */
.ruler {
  background: #e8eaed;
}
.ruler-numbers {
  font: 9.500px Roboto, sans-serif;
  fill: #555;
  text-anchor: middle;
}

/* document */
.canvas {
  flex: 1;
  min-height: 0;
  display: flex;
  justify-content: space-between;
  background: #f8f9fb;
  box-shadow: inset 0 3px 3px -2px #c4c6ca;
}
.left-rail {
  width: 253px;
  padding-top: 16px;
  border-left: 4px solid #eceef1;
}
.outline-button {
  width: 49px;
  height: 39px;
  padding-left: 17px;
  display: flex;
  align-items: center;
  border-radius: 0 20px 20px 0;
  background: #fff;
  box-shadow: 0 1px 3px #c8cacd;
}
.page {
  width: 700px;
  height: 495px;
  overflow: hidden;
  background: #fff;
  box-shadow: 0 0 2px #cfd1d4, inset 0 3px 3px -2px #c4c6ca;
}
.species {
  width: 429px;
  margin: 6px 0 0 146px;
  border-collapse: collapse;
  table-layout: fixed;
  font: 12.500px Lato, sans-serif;
  letter-spacing: 0.1px;
  color: #555;
}
.species tr {
  height: 30px;
}
.species tr:nth-child(even) {
  height: 29px;
}
.species th,
.species td {
  width: 141px;
  padding: 0 5px;
  border: 1px solid #777;
  line-height: 18px;
  text-align: left;
}
.species th:last-child {
  width: 146px;
}
.species th {
  padding: 0 5px 1px;
  font-family: "Liberation Sans", sans-serif;
  color: #111;
}
.species b {
  font-family: "Liberation Sans", sans-serif;
  letter-spacing: 0;
  color: #111;
}
.species .shaded {
  background: #b3b3b3;
}
.species .editing {
  position: relative;
  letter-spacing: 0;
}
.text-cursor {
  display: inline-block;
  width: 1px;
  height: 15px;
  margin-left: 1px;
  vertical-align: -2px;
  background: #000;
}
.cell-menu {
  position: absolute;
  top: 1px;
  right: 1px;
  width: 11px;
  height: 10px;
  padding: 3px 2px;
  border: 1px solid #e4e4e4;
}
.cell-menu svg {
  fill: #bbb;
}
.lead {
  margin: 30px 0 0 205px;
  font: 12.500px/16px Lato, sans-serif;
  letter-spacing: 0.14px;
  color: #555;
}
.formula {
  margin: 21px 0 0 285px;
  display: flex;
  align-items: center;
  font: bold 18px/22px "Liberation Sans", sans-serif;
  color: #222;
}
.lhs {
  padding-bottom: 2px;
}
.fraction {
  width: 101px;
  margin-left: 26px;
  text-align: center;
}
.top,
.bottom {
  display: block;
}
.top {
  padding: 0 0 7px 2px;
  border-bottom: 3px solid #222;
}
.bottom {
  padding: 5px 0 2px 7px;
}
.blank {
  font: bold 16px/20px "Liberation Sans", sans-serif;
  color: #111;
}
.blank span {
  -webkit-text-stroke: 0.7px #111;
}
.first {
  margin: 22px 0 0 222px;
}
.second {
  margin: 13px 0 0 328px;
}
.third {
  margin: 40px 0 0 226px;
}
.right-rail {
  width: 293px;
  padding: 0 4px 7px 0;
  display: flex;
  flex-direction: column;
  align-items: flex-end;
  justify-content: flex-end;
}
.scroll-thumb {
  width: 6px;
  height: 58px;
  margin-bottom: 16px;
  background: #dadce0;
}
.explore {
  width: 33px;
  height: 32px;
  margin-right: 10px;
  display: flex;
  align-items: center;
  justify-content: center;
  background: #fff;
  border: 1px solid #dcdee1;
}

/* side panel */
.side-panel {
  flex: 1;
  padding-left: 16px;
}
.calendar {
  width: 14px;
  height: 14px;
  margin-top: 18px;
  border-top: 3px solid #2f5fc4;
  background: #4a80ea;
  color: #fff;
  font-size: 8px;
  line-height: 11px;
  text-align: center;
}
.keep {
  margin-top: 33px;
}
.tasks {
  margin: 33px 0 0 -1px;
}
.expand {
  margin: 384px 0 0 4px;
}

/* taskbar */
.taskbar {
  height: 33px;
  flex: none;
  display: flex;
  background: #04080f;
}
.start {
  width: 38px;
  padding: 12px 0 0 7px;
}
.search {
  width: 328px;
  padding: 4px 14px 0 9px;
  display: flex;
  align-items: center;
  background: #f2f2f2;
  font: 13.500px "Open Sans", sans-serif;
  letter-spacing: -0.2px;
  color: #555;
}
.search span {
  margin-left: 10px;
}
.mic {
  margin-left: auto;
}
.apps {
  display: flex;
}
.apps i {
  width: 46.900px;
  padding-top: 4px;
  display: flex;
  align-items: center;
  justify-content: center;
}
.apps .running {
  background: #303338;
}
.word-letter {
  font: bold 9px Roboto, sans-serif;
  fill: #fff;
}
.chrome-letter {
  font: 8px Roboto, sans-serif;
  fill: #fff;
}
.tray {
  margin-left: auto;
  display: flex;
  align-items: center;
}
.tray > svg {
  margin-top: 4px;
}
.up {
  margin-left: 22px;
}
.battery {
  margin-left: 9px;
}
.volume {
  margin-left: 7px;
}
.clock {
  width: 62px;
  margin: 2px 0 0 3px;
  font: 11.500px/16px "Open Sans", sans-serif;
  letter-spacing: -0.4px;
  text-align: center;
  color: #f2f2f2;
}
.clock span {
  display: block;
}
.notifications {
  position: relative;
  width: 26px;
  height: 33px;
  margin-left: 10px;
  padding-top: 11px;
}
.notifications span {
  position: absolute;
  left: 7px;
  top: 17px;
  width: 16px;
  height: 16px;
  border: 1px solid #999;
  border-radius: 50%;
  background: #333;
  color: #fff;
  font-size: 11px;
  line-height: 14px;
  text-align: center;
}

/* overlays */
.pointer {
  position: absolute;
  left: 585px;
  top: 358px;
  width: 68px;
  height: 68px;
  display: flex;
  align-items: center;
  justify-content: center;
  padding-left: 2px;
  border: 3px solid #f0ee2a;
  border-radius: 50%;
}
.watermark {
  position: absolute;
  left: 9px;
  top: 664px;
  font-family: "Open Sans", sans-serif;
  font-weight: 800;
  color: #fff;
  text-shadow: 1px 1px 1px #222, -1px 0 1px #777, 0 -1px 1px #777, 1px 0 1px #555;
}
.recorded {
  font-size: 11px;
  line-height: 14px;
  letter-spacing: -0.15px;
}
.brand {
  margin-top: -2px;
  display: flex;
  align-items: center;
  font-size: 16px;
}
.w1 {
  width: 115px;
  letter-spacing: 0.7px;
}
.w2 {
  margin-left: 4px;
  letter-spacing: 0.1px;
}
```
